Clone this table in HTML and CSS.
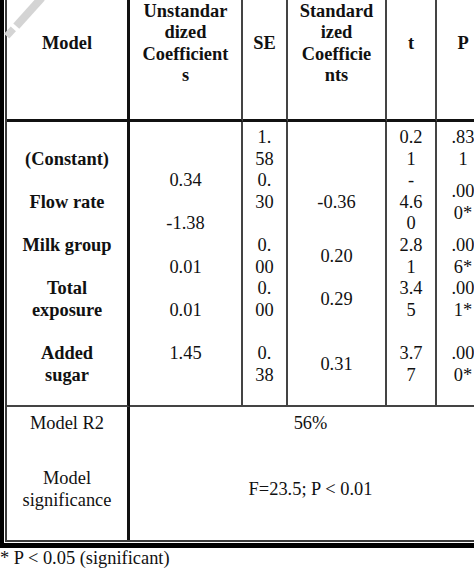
FILE: index.html
```html
<!DOCTYPE html>
<html lang="en">
<head>
  <meta charset="UTF-8" />
  <meta name="viewport" content="width=device-width, initial-scale=1" />
  <title>Regression model</title>
  <link rel="stylesheet" href="styles.css">
</head>
<body>

  <!-- marca d'agua cortada no canto -->
  <div class="mark"></div>
  <div class="mark mark-tail"></div>

  <div class="sheet">
    <div class="grid">
      <!-- cabecalho -->
      <div class="cell head first">Model</div>
      <div class="cell head">Unstandar<br>dized<br>Coefficient<br>s</div>
      <div class="cell head">SE</div>
      <div class="cell head">Standard<br>ized<br>Coefficie<br>nts</div>
      <div class="cell head">t</div>
      <div class="cell head">P</div>

      <!-- corpo -->
      <div class="cell body first bold">
        <div class="sp"></div>
        <div class="ln">(Constant)</div>
        <div class="sp"></div>
        <div class="ln">Flow rate</div>
        <div class="sp"></div>
        <div class="ln">Milk group</div>
        <div class="sp"></div>
        <div class="ln">Total</div>
        <div class="ln">exposure</div>
        <div class="sp"></div>
        <div class="ln">Added</div>
        <div class="ln">sugar</div>
      </div>
      <div class="cell body">
        <div class="sp"></div><div class="sp"></div>
        <div class="ln">0.34</div>
        <div class="sp"></div>
        <div class="ln">-1.38</div>
        <div class="sp"></div>
        <div class="ln">0.01</div>
        <div class="sp"></div>
        <div class="ln">0.01</div>
        <div class="sp"></div>
        <div class="ln">1.45</div>
      </div>
      <div class="cell body">
        <div class="ln">1.</div>
        <div class="ln">58</div>
        <div class="ln">0.</div>
        <div class="ln">30</div>
        <div class="sp"></div>
        <div class="ln">0.</div>
        <div class="ln">00</div>
        <div class="ln">0.</div>
        <div class="ln">00</div>
        <div class="sp"></div>
        <div class="ln">0.</div>
        <div class="ln">38</div>
      </div>
      <div class="cell body">
        <div class="sp"></div><div class="sp"></div><div class="sp"></div>
        <div class="ln">-0.36</div>
        <div class="sp"></div><div class="sp half"></div>
        <div class="ln">0.20</div>
        <div class="sp"></div>
        <div class="ln">0.29</div>
        <div class="sp"></div><div class="sp"></div>
        <div class="ln">0.31</div>
      </div>
      <div class="cell body">
        <div class="ln">0.2</div>
        <div class="ln">1</div>
        <div class="ln">-</div>
        <div class="ln">4.6</div>
        <div class="ln">0</div>
        <div class="ln">2.8</div>
        <div class="ln">1</div>
        <div class="ln">3.4</div>
        <div class="ln">5</div>
        <div class="sp"></div>
        <div class="ln">3.7</div>
        <div class="ln">7</div>
      </div>
      <div class="cell body">
        <div class="ln">.83</div>
        <div class="ln">1</div>
        <div class="sp half"></div>
        <div class="ln">.00</div>
        <div class="ln">0*</div>
        <div class="sp half"></div>
        <div class="ln">.00</div>
        <div class="ln">6*</div>
        <div class="ln">.00</div>
        <div class="ln">1*</div>
        <div class="sp"></div>
        <div class="ln">.00</div>
        <div class="ln">0*</div>
      </div>

      <!-- resumo do modelo -->
      <div class="cell foot first">Model R2</div>
      <div class="cell foot span">56%</div>
      <div class="cell foot sig first">Model<br>significance</div>
      <div class="cell foot sig span">F=23.5; P &lt; 0.01</div>
    </div>
  </div>

  <p class="note">* P &lt; 0.05 (significant)</p>

</body>
</html>
```

FILE: styles.css
```css
html, body {
  overflow: hidden;
}

body {
  margin: 0;
  background: #fff;
  color: #111;
  font-family: "Liberation Serif", "Times New Roman", serif;
  font-size: 18.4px;
  line-height: 21.6px;
  position: relative;
}

/* moldura dupla: barra preta por fora, linha fina por dentro */
.sheet {
  width: max-content;
  margin-top: -32px; /* topo da tabela fica fora do recorte */
  border-left: 4px solid #000;
  border-bottom: 5px solid #000;
  padding: 0 0 1px 1px;
}

.grid {
  display: grid;
  grid-template-columns: 123px 113px 45px 99px 50px 54px;
  border-left: 2px solid #3c3c3c;
  border-bottom: 2px solid #3c3c3c;
  border-right: 2px solid #3c3c3c;
}

.cell {
  box-sizing: border-box;
  border-right: 2px solid #444;
  text-align: center;
  white-space: nowrap;
}

.cell.first {
  border-right: 3px solid #111;
}

.head {
  height: 154px;
  border-bottom: 3px solid #111;
  font-weight: bold;
  line-height: 21.2px;
  display: flex;
  align-items: center;
  justify-content: center;
}

.body {
  height: 285px;
  padding-top: 5px;
  border-bottom: 2px solid #444;
}

.bold {
  font-weight: bold;
}

.ln {
  height: 21.6px;
}

.sp {
  height: 21.6px;
}

.sp.half {
  height: 10.8px;
}

.foot {
  height: 33px;
  padding-top: 6px;
}

.foot.span {
  grid-column: span 5;
  border-right: none;
}

.foot.sig {
  height: 100px;
  padding-top: 0;
  display: flex;
  align-items: center;
  justify-content: center;
}

.note {
  margin: 0;
  padding-left: 0;
}

/* pedaco da marca d'agua */
.mark {
  position: absolute;
  left: 10px;
  top: 8px;
  width: 38px;
  height: 8px;
  background: #d4d4d4;
  transform: rotate(-48deg);
  z-index: 2;
}

.mark-tail {
  left: 5px;
  top: 29px;
  width: 10px;
  height: 7px;
}
```
